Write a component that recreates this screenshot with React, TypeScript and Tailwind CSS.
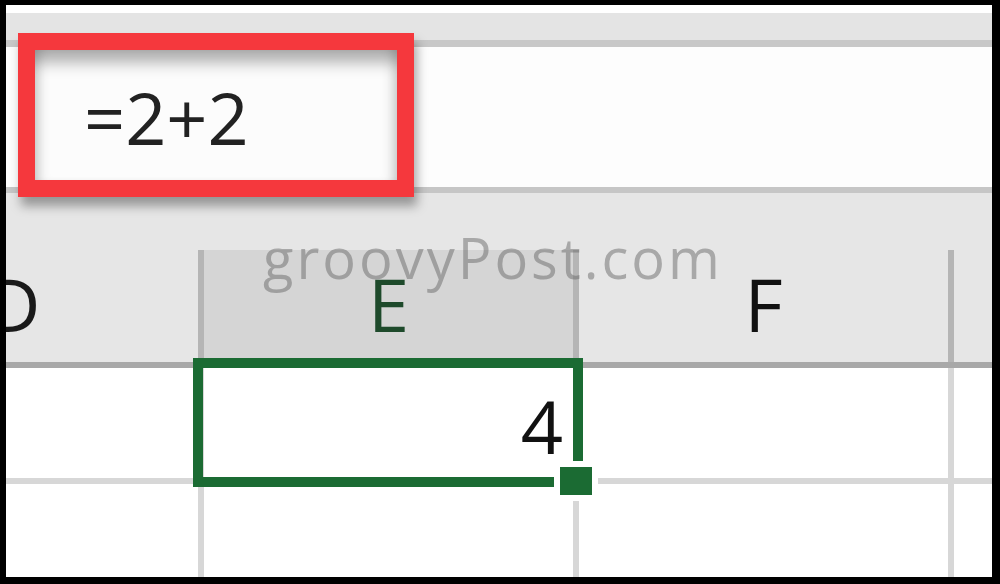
import React from 'react';

// Zoomed-in spreadsheet: formula bar callout, column headers D/E/F, selected cell E1 = 4
const headerCols = [
    { key: 'D', cls: 'bg-[#e6e6e6] text-[#1a1a1a]' },
    { key: 'E', cls: 'bg-[#d5d5d5] text-[#1e4a2b]' },
    { key: 'F', cls: 'bg-[#e6e6e6] text-[#111111]' },
    { key: 'G', cls: 'bg-[#e6e6e6] text-[#111111]' },
];

function GridRow({ height, values }: { height: string; values: string[] }) {
    return (
        <div className={`flex ml-[-177px] ${height}`}>
            {values.map((v, i) => (
                <div key={i} className="w-[375px] shrink-0 border-r-[6px] border-[#d7d7d7] bg-white flex items-end justify-end pr-[10px] pb-[15px] text-[74px] leading-none text-[#111111]">
                    {v}
                </div>
            ))}
        </div>
    );
}

export default function App() {
    return (
        <div className="w-[1000px] h-[584px] bg-black pt-[5px] pl-[6px] pr-[8px] pb-[7px]">
            <div className="relative w-full h-full overflow-hidden bg-white flex flex-col font-['Open_Sans',sans-serif]">
                {/* Ribbon edge */}
                <div className="h-[8px] shrink-0 bg-white" />
                <div className="h-[27px] shrink-0 bg-[#e4e4e4]" />
                <div className="h-[7px] shrink-0 bg-[#c8c8c8]" />

                {/* Formula bar */}
                <div className="h-[140px] shrink-0 bg-[#fdfdfd]" />
                <div className="h-[6px] shrink-0 bg-[#c6c6c6]" />

                {/* Space above headers */}
                <div className="h-[57px] shrink-0 bg-[#e6e6e6]" />

                {/* Column headers */}
                <div className="flex h-[112px] shrink-0 ml-[-177px]">
                    {headerCols.map(c => (
                        <div key={c.key} className={`w-[375px] shrink-0 border-r-[6px] border-[#b5b5b5] flex items-end justify-center pb-[21px] text-[74px] leading-none ${c.cls}`}>
                            {c.key === 'G' ? '' : c.key}
                        </div>
                    ))}
                </div>
                <div className="h-[6px] shrink-0 bg-[#a8a8a8]" />

                {/* Rows */}
                <GridRow height="h-[110px] shrink-0" values={['', '4', '', '']} />
                <div className="h-[6px] shrink-0 bg-[#d7d7d7]" />
                <GridRow height="flex-1" values={['', '', '', '']} />

                {/* Watermark */}
                <div className="absolute left-[257px] top-[224px] text-[56px] leading-none tracking-[3px] text-[rgba(105,105,105,0.5)] pointer-events-none">
                    groovyPost.com
                </div>

                {/* Selection box + fill handle */}
                <div className="absolute left-[187px] top-[353px] w-[390px] h-[129px] border-[10px] border-[#1b6b33]" />
                <div className="absolute left-[554px] top-[462px] w-[32px] h-[28px] bg-[#1b6b33] ring-[6px] ring-white" />

                {/* Red callout around formula */}
                <div className="absolute left-[12px] top-[28px] w-[396px] h-[164px] border-[17px] border-[#f5383d] bg-[#fcfcfc] shadow-[3px_9px_10px_rgba(0,0,0,0.35)]">
                    <div className="w-full h-full pl-[49px] pt-[31px] shadow-[inset_0_20px_16px_-8px_rgba(0,0,0,0.32),inset_12px_0_12px_-8px_rgba(0,0,0,0.18),inset_-12px_0_12px_-8px_rgba(0,0,0,0.18)]">
                        <span className="text-[72px] leading-none text-[#222222]">=2+2</span>
                    </div>
                </div>
            </div>
        </div>
    );
}
